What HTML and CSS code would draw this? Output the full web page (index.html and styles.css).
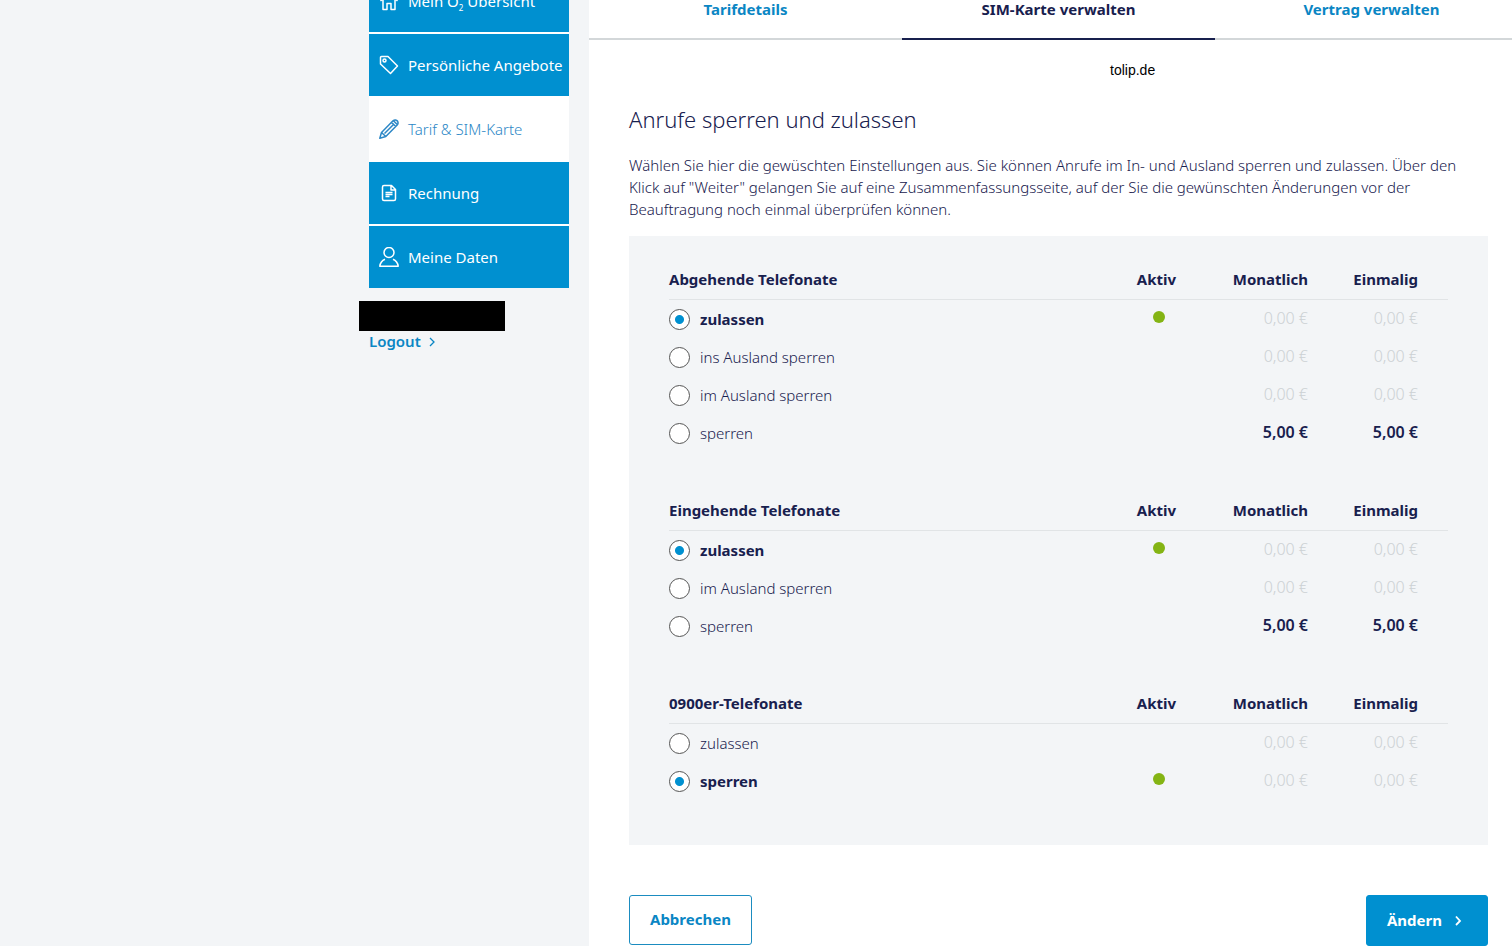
FILE: index.html
```html
<!DOCTYPE html>
<html lang="de">
<head>
<meta charset="utf-8">
<title>Anrufe sperren und zulassen</title>
<link rel="stylesheet" href="styles.css">
</head>
<body>
<div class="page">
  <aside class="sidebar">
    <nav class="nav">
      <a class="nav-item" href="#"><svg class="icon" viewBox="0 0 20 20"><path d="M1.500 10 10 2.500l8.500 7.500M4 9v9.500h4v-6h4v6h4V9"/></svg><span>Mein O<sub>2</sub> Übersicht</span></a>
      <a class="nav-item" href="#"><svg class="icon" viewBox="0 0 20 20"><path d="M2.500 1.500h6.500l9.500 9.500-7 7.500-10-9.500v-6.500a1 1 0 0 1 1-1z"/><circle cx="5.500" cy="5.500" r="1.500"/></svg><span>Persönliche Angebote</span></a>
      <a class="nav-item nav-item-active" href="#"><svg class="icon" viewBox="0 0 20 20"><path d="M.8 19.200 2.500 13.500 14 1.800q1.200-1 2.500-.8 2.600.6 2.600 3 0 1-.9 2L6.800 17.500zM2.500 13.500l4.300 4M5.500 14.500l9-9M12.500 3.300l4.200 4.200M14.500 1.800l3.700 3.800"/></svg><span>Tarif &amp; SIM-Karte</span></a>
      <a class="nav-item" href="#"><svg class="icon" viewBox="0 0 20 20"><path d="M5 2.500h7.500l4 4v9.500a1.500 1.500 0 0 1-1.500 1.500H5A1.500 1.500 0 0 1 3.500 16V4A1.500 1.500 0 0 1 5 2.500zM12 2.800V7h4M6.500 9.500h7M6.500 11.500h7M6.500 13.500h4"/></svg><span>Rechnung</span></a>
      <a class="nav-item" href="#"><svg class="icon" viewBox="0 0 20 20"><path d="M6 12.200Q1.500 14 .8 19.200h18.400q-.7-5.200-5.200-7"/><circle cx="10" cy="5.500" r="5"/></svg><span>Meine Daten</span></a>
    </nav>
    <div class="account">
      <div class="redacted"></div>
      <a class="logout" href="#">Logout<svg class="chevron" viewBox="0 0 10 10"><path d="M3 2l4 4-4 4"/></svg></a>
    </div>
  </aside>
  <main class="main">
    <nav class="tabs">
      <a class="tab" href="#">Tarifdetails</a>
      <a class="tab tab-active" href="#">SIM-Karte verwalten</a>
      <a class="tab" href="#">Vertrag verwalten</a>
    </nav>
    <form class="content">
      <p class="site-mark">tolip.de</p>
      <h1 class="title">Anrufe sperren und zulassen</h1>
      <p class="intro">Wählen Sie hier die gewüschten Einstellungen aus. Sie können Anrufe im In- und Ausland sperren und zulassen. Über den Klick auf "Weiter" gelangen Sie auf eine Zusammenfassungsseite, auf der Sie die gewünschten Änderungen vor der Beauftragung noch einmal überprüfen können.</p>
      <div class="panel">
        <table class="options">
          <thead><tr><th class="name">Abgehende Telefonate</th><th class="active">Aktiv</th><th class="price">Monatlich</th><th class="price">Einmalig</th></tr></thead>
          <tbody>
            <tr><td><label class="option"><input type="radio" name="out" checked><span>zulassen</span></label></td><td class="active"><span class="dot"></span></td><td class="price">0,00 €</td><td class="price">0,00 €</td></tr>
            <tr><td><label class="option"><input type="radio" name="out"><span>ins Ausland sperren</span></label></td><td></td><td class="price">0,00 €</td><td class="price">0,00 €</td></tr>
            <tr><td><label class="option"><input type="radio" name="out"><span>im Ausland sperren</span></label></td><td></td><td class="price">0,00 €</td><td class="price">0,00 €</td></tr>
            <tr><td><label class="option"><input type="radio" name="out"><span>sperren</span></label></td><td></td><td class="price paid">5,00 €</td><td class="price paid">5,00 €</td></tr>
          </tbody>
        </table>
        <table class="options">
          <thead><tr><th class="name">Eingehende Telefonate</th><th class="active">Aktiv</th><th class="price">Monatlich</th><th class="price">Einmalig</th></tr></thead>
          <tbody>
            <tr><td><label class="option"><input type="radio" name="in" checked><span>zulassen</span></label></td><td class="active"><span class="dot"></span></td><td class="price">0,00 €</td><td class="price">0,00 €</td></tr>
            <tr><td><label class="option"><input type="radio" name="in"><span>im Ausland sperren</span></label></td><td></td><td class="price">0,00 €</td><td class="price">0,00 €</td></tr>
            <tr><td><label class="option"><input type="radio" name="in"><span>sperren</span></label></td><td></td><td class="price paid">5,00 €</td><td class="price paid">5,00 €</td></tr>
          </tbody>
        </table>
        <table class="options">
          <thead><tr><th class="name">0900er-Telefonate</th><th class="active">Aktiv</th><th class="price">Monatlich</th><th class="price">Einmalig</th></tr></thead>
          <tbody>
            <tr><td><label class="option"><input type="radio" name="premium"><span>zulassen</span></label></td><td></td><td class="price">0,00 €</td><td class="price">0,00 €</td></tr>
            <tr><td><label class="option"><input type="radio" name="premium" checked><span>sperren</span></label></td><td class="active"><span class="dot"></span></td><td class="price">0,00 €</td><td class="price">0,00 €</td></tr>
          </tbody>
        </table>
      </div>
      <div class="actions">
        <button class="button button-outline" type="button">Abbrechen</button>
        <button class="button button-primary" type="submit">Ändern<svg class="chevron" viewBox="0 0 10 10"><path d="M2 1.500l4 4.500-4 4"/></svg></button>
      </div>
    </form>
  </main>
</div>
</body>
</html>
```
FILE: styles.css
```css
* {
  box-sizing: border-box;
}

body {
  margin: 0;
  background: #fff;
  color: #18204e;
  font: 300 15px/22px "Noto Sans", "Open Sans", sans-serif;
}

a {
  text-decoration: none;
}

.page {
  display: grid;
  grid-template-columns: 589fr 923fr;
  min-height: 100vh;
  overflow: hidden;
}

.sidebar {
  display: flex;
  flex-direction: column;
  align-items: flex-end;
  padding-right: 20px;
  background: #f3f5f7;
}

.nav {
  display: flex;
  flex-direction: column;
  gap: 2px;
  width: 200px;
  margin-top: -30px;
  background: #fff;
}

.nav-item {
  display: flex;
  align-items: center;
  gap: 9px;
  height: 62px;
  padding: 0 0 1px 10px;
  background: #0090d0;
  color: #fff;
  font-weight: 400;
  white-space: nowrap;
}

.nav-item-active {
  background: #fff;
  color: #2c87c6;
  font-weight: 300;
}

.nav-item sub {
  font-size: 8px;
  line-height: 0;
}

.icon {
  flex: none;
  width: 20px;
  height: 20px;
  fill: none;
  stroke: currentColor;
  stroke-width: 1.5;
  stroke-linejoin: round;
}

.account {
  width: 210px;
  margin-top: 13px;
}

.redacted {
  width: 146px;
  height: 30px;
  background: #000;
}

.logout {
  display: flex;
  align-items: center;
  gap: 6px;
  margin-left: 10px;
  color: #0a86c4;
  font-weight: 600;
  line-height: 20px;
}

.chevron {
  width: 10px;
  height: 10px;
  overflow: visible;
  fill: none;
  stroke: currentColor;
  stroke-width: 1.3;
}

.tabs {
  display: flex;
  margin-right: -16px;
}

.tab {
  flex: 1;
  height: 40px;
  border-bottom: 2px solid #d3d7d9;
  color: #0a86c4;
  font-weight: 700;
  line-height: 18px;
  text-align: center;
}

.tab-active {
  border-bottom-color: #18204e;
  color: #18204e;
}

.content {
  padding: 19px 24px 0 40px;
}

.site-mark {
  margin: 0;
  padding-left: 56%;
  color: #000;
  font: 14px/22px "Liberation Sans", sans-serif;
}

.title {
  margin: 22px 0 19px;
  font-size: 22px;
  font-weight: 300;
  line-height: 32px;
}

.intro {
  margin: 0 0 16px;
}

.panel {
  display: flex;
  flex-direction: column;
  gap: 39px;
  padding: 24px 40px 45px;
  background: #f3f5f7;
}

.options {
  width: 100%;
  border-collapse: separate;
  border-spacing: 0;
  table-layout: fixed;
}

.options th {
  height: 40px;
  padding: 0 0 2px;
  border-bottom: 1px solid #e1e4e6;
  font-weight: 700;
  text-align: right;
}

.options td {
  height: 38px;
  padding: 0;
}

.options .name {
  text-align: left;
}

.options th.active {
  width: 110px;
  padding-right: 52px;
}

.options td.active {
  padding: 0 63px 4px 0;
}

.options .price {
  width: 110px;
  padding-right: 30px;
  text-align: right;
}

.options td.price {
  padding-bottom: 2px;
  color: #ccd1d4;
  font-size: 16px;
}

.options td.paid {
  color: #18204e;
  font-weight: 600;
}

.dot {
  display: block;
  width: 12px;
  height: 12px;
  margin-left: auto;
  border-radius: 50%;
  background: #84b414;
}

.option {
  display: flex;
  align-items: center;
  gap: 10px;
}

.option input {
  appearance: none;
  flex: none;
  width: 21px;
  height: 21px;
  margin: 0;
  border: 1px solid #555;
  border-radius: 50%;
  background: #fff;
}

.option input:checked {
  background: radial-gradient(circle, #0090d0 4px, #fff 5px);
}

.option input:checked + span {
  font-weight: 700;
}

.actions {
  display: flex;
  justify-content: space-between;
  align-items: flex-start;
  margin-top: 50px;
}

.button {
  display: flex;
  align-items: center;
  justify-content: center;
  height: 50px;
  padding: 0 20px 2px;
  border: 1px solid #1b8cc0;
  border-radius: 3px;
  font: 700 15px/22px "Noto Sans", "Open Sans", sans-serif;
}

.button-outline {
  background: #fff;
  color: #0a86c4;
}

.button-primary {
  gap: 12px;
  height: 51px;
  padding-right: 23px;
  border-color: #0090d0;
  background: #0090d0;
  color: #fff;
}

.button .chevron {
  stroke-width: 1.8;
}
```
